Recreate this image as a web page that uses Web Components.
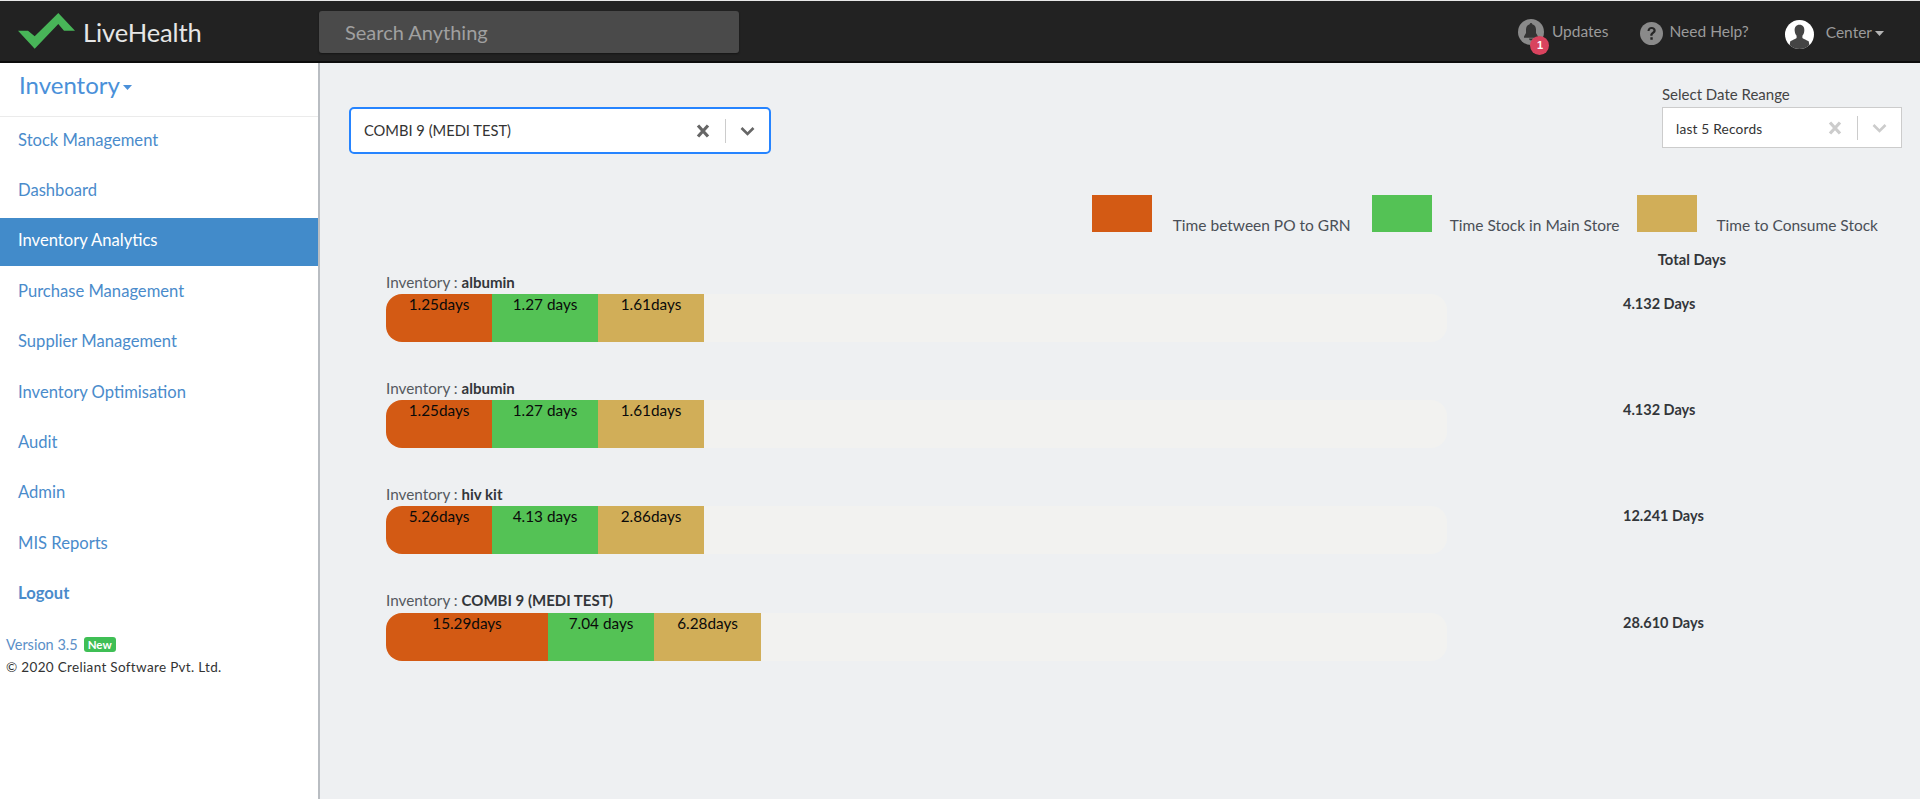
<!DOCTYPE html>
<html><head><meta charset="utf-8"><title>LiveHealth</title>
<style>
html,body{margin:0;height:100%;overflow:hidden;background:#eef0f2;font-family:Lato,"Open Sans",sans-serif}
</style></head><body>
<lh-app></lh-app>
<script>
function def(name,css,html,init){
  customElements.define(name,class extends HTMLElement{
    connectedCallback(){
      if(this.shadowRoot)return;
      const r=this.attachShadow({mode:'open'});
      const a=n=>this.getAttribute(n)||'';
      r.innerHTML='<style>'+css+'</style>'+(typeof html==='function'?html(a):html);
      if(init)init.call(this,r);
    }
  });
}
const caret=c=>`<svg width="9" height="5" viewBox="0 0 9 5" style="display:block"><path d="M0 0h9L4.5 5z" fill="${c}"/></svg>`;

def('lh-app',`:host{display:flex;flex-direction:column;height:799px;width:1920px}
.b{display:flex;flex:1;min-height:0}`,
`<lh-header></lh-header><div class="b"><lh-sidebar></lh-sidebar><lh-main></lh-main></div>`);

def('lh-header',`:host{display:flex;align-items:center;box-sizing:border-box;height:63px;background:#222;border-top:1px solid #e8e8e8;border-bottom:2px solid #0c0c0c;padding-top:2px;color:#9b9b9b;font:15.500px Lato,sans-serif}
.logo{display:flex;align-items:center;width:319px;flex:none}
svg.m{margin-left:18px;display:block;flex:none;margin-top:-2px}
.name{margin-left:7px;font-size:25.500px;color:#e6e6e6;font-weight:400;letter-spacing:-.1px;line-height:30px}
.search{width:420px;height:42px;background:#4a4a4a;border-radius:3px;box-shadow:0 1px 2px #0006;box-sizing:border-box;padding-left:26px;display:flex;align-items:center;font-size:20px;color:#a0a0a0}
.right{margin-left:auto;display:flex;align-items:center;height:100%}
.ic{position:relative;display:block}
.badge{position:absolute;left:12.500px;top:16.500px;width:19px;height:19px;border-radius:50%;background:#d9435e;color:#fff;font:700 11px/19px "Liberation Sans",sans-serif;text-align:center}
.i1{margin-right:8px;width:26px;height:26px}
.i2{margin-left:31px;margin-right:7px;margin-top:2px}
.av{margin-left:36px;margin-right:12px;margin-top:5px}
.car{margin-left:3px;margin-top:2px}
.t{line-height:20px}
.up{margin-top:-2px}`,
`<div class="logo"><svg class="m" width="58" height="38" viewBox="0 0 58 38"><path d="M0 18.700H10L16.700 24.300 40.300 1 57 18.700H46L40.300 12 16.700 36.700z" fill="#48b558"/></svg><span class="name">LiveHealth</span></div>
<div class="search">Search Anything</div>
<div class="right" style="margin-right:36px">
<span class="ic i1"><svg width="26" height="26" viewBox="0 0 26 26" style="display:block"><circle cx="13" cy="13" r="13" fill="#8a8a8a"/><path d="M13 4c-.8 0-1.300.6-1.300 1.300-2.300.6-3.700 2.600-3.700 5.200v3.500L6 17.500v1.300h14v-1.300L18 14v-3.500c0-2.600-1.400-4.600-3.700-5.200C14.300 4.600 13.800 4 13 4zM11 19.500a2 2 0 0 0 4 0z" fill="#343434"/></svg><span class="badge">1</span></span>
<span class="t up">Updates</span>
<svg class="i2" width="23" height="23" viewBox="0 0 24 24"><circle cx="12" cy="12" r="12" fill="#8a8a8a"/><path d="M7.800 9.300C8 6.800 9.800 5.300 12.100 5.300c2.500 0 4.300 1.500 4.300 3.600 0 1.700-1 2.500-2.200 3.300-1 .7-1.200 1.100-1.200 2.200h-2.300c0-1.900.5-2.800 1.800-3.700 1-.7 1.500-1.100 1.500-1.800 0-.9-.8-1.500-1.900-1.500-1.200 0-2 .7-2.100 1.900zM10.800 15.800h2.500v2.800h-2.500z" fill="#262626"/></svg>
<span class="t up">Need Help?</span>
<svg class="av" width="29" height="29" viewBox="0 0 30 30"><defs><clipPath id="c"><circle cx="15" cy="15" r="15"/></clipPath></defs><circle cx="15" cy="15" r="15" fill="#fff"/><g clip-path="url(#c)"><path d="M15 5c-3.500 0-5.300 2.700-5 6 .2 2.300 1 4 2 5.200v2.300c-1 1.200-4.500 2-6.500 3.500L4 30h22l-1.500-8c-2-1.500-5.500-2.300-6.500-3.500v-2.300c1-1.200 1.800-2.900 2-5.200.3-3.300-1.500-6-5-6z" fill="#454545"/></g></svg>
<span class="t">Center</span><span class="car">${caret('#b5b5b5')}</span>
</div>`);

def('lh-sidebar',`:host{display:block;box-sizing:border-box;width:320px;flex:none;background:#fff;border-right:2px solid #b9bdc2;color:#428bca;font:15.500px Lato,sans-serif}
.h{box-sizing:border-box;height:54px;border-bottom:1px solid #ebebeb;padding:2px 0 0 19px;display:flex;align-items:flex-start;font-size:24px;line-height:40px;color:#4a90d9}
.h span{margin:20px 0 0 3px}
nav{display:flex;flex-direction:column;margin-top:-1px}
.foot{margin:14px 0 0 6px;font-size:14.500px;line-height:22px;color:#333}
.v{color:#5b8fc7;display:flex;align-items:center}
.new{margin-left:6px;background:#3fbf55;color:#fff;border-radius:3px;font-size:11.500px;font-weight:700;line-height:15px;padding:0 4px}
.c{font-size:13.500px;letter-spacing:.33px}`,
`<div class="h">Inventory<span>${caret('#4a90d9')}</span></div>
<nav>
<lh-nav-item>Stock Management</lh-nav-item>
<lh-nav-item>Dashboard</lh-nav-item>
<lh-nav-item active>Inventory Analytics</lh-nav-item>
<lh-nav-item>Purchase Management</lh-nav-item>
<lh-nav-item>Supplier Management</lh-nav-item>
<lh-nav-item>Inventory Optimisation</lh-nav-item>
<lh-nav-item>Audit</lh-nav-item>
<lh-nav-item>Admin</lh-nav-item>
<lh-nav-item>MIS Reports</lh-nav-item>
<lh-nav-item bold>Logout</lh-nav-item>
</nav>
<div class="foot"><div class="v">Version 3.5<span class="new">New</span></div><div class="c">© 2020 Creliant Software Pvt. Ltd.</div></div>`);

def('lh-nav-item',`:host{display:flex;align-items:center;box-sizing:border-box;flex:none;height:48px;margin:1.200px 0;padding:0 0 3px 18px;color:#4a8bcb;font-size:16.600px}
:host([active]){background:#428bca;color:#fff}
:host([bold]){font-weight:700}`,`<slot></slot>`);

def('lh-select',`:host{display:flex;align-items:center;box-sizing:border-box;background:#fff;font-family:Lato,sans-serif;color:#333}
.t{flex:1;white-space:nowrap}
.sep{width:1px;align-self:center;height:24px;background:#ccc;margin:0 14px 0 15px}
svg{display:block;flex:none}
.d{margin-right:14px}
:host([focus]){width:422px;height:47px;border:2px solid #2684ff;border-radius:5px;padding-left:13px;font-size:14.700px;margin-top:22px}
:host([focus]) svg{color:#666}
:host([focus]) .t{margin-top:-2px}
:host(:not([focus])){width:240px;height:41px;border:1px solid #ccc;padding:2px 0 0 13px;font-size:13.700px;letter-spacing:.2px}
:host(:not([focus])) svg,:host(:not([focus])) .sep{margin-top:-2px}
:host(:not([focus])) svg{color:#ccc}`,
a=>`<span class="t">${a('value')}</span>
<svg class="x" width="14" height="14" viewBox="0 0 14 14"><path d="M2 1.500l10 11M12 1.500l-10 11" stroke="currentColor" stroke-width="3.200" fill="none"/></svg>
<span class="sep"></span>
<svg class="d" width="15" height="10" viewBox="0 0 15 10"><path d="M1.500 2l6 6 6-6" stroke="currentColor" stroke-width="2.600" fill="none"/></svg>`);

def('lh-date',`:host{display:block;width:240px;color:#444;font:15px/20px Lato,sans-serif}
.l{height:22px;margin-top:-1px;margin-bottom:1px}`,
`<div class="l">Select Date Reange</div><lh-select value="last 5 Records"></lh-select>`);

def('lh-legend-item',`:host{display:flex;align-items:flex-end;font:15.500px/18px Lato,sans-serif;color:#4a4f57}
i{display:block;width:60px;height:37px;background:var(--c)}
span{margin-bottom:-2px;white-space:nowrap}`,
a=>`<i style="--c:${a('color')};margin-right:${a('gap')}px"></i><span>${a('label')}</span>`);

def('lh-bar-row',`:host{display:flex;align-items:flex-start;height:106px;font:15.300px/20px Lato,sans-serif;color:#55595f}
.w{width:1061px;flex:none}
.l{height:22px;line-height:20px}
:host(:last-child) .l{height:23px}
:host(:last-child) .v{margin-top:23px}
b{font-weight:700;color:#33363a;font-size:15px}
.bar{display:flex;height:48px;background:#f2f2f0;border-radius:16px;overflow:hidden;color:#0a0a0a;text-align:center;line-height:20px}
.bar span{display:block}
.v{margin:22px 0 0 176px;font-weight:700;color:#33363a;font-size:14.500px;line-height:20px}`,
a=>{const s=a('segs').split('|').map((x,i)=>{const[p,t]=x.split(':');return `<span style="width:${p}px;background:${['#d35a14','#54c255','#d1ae58'][i]}">${t}</span>`}).join('');
return `<div class="w"><div class="l">Inventory : <b>${a('name')}</b></div><div class="bar">${s}</div></div><div class="v">${a('total')}</div>`});

def('lh-main',`:host{display:block;flex:1;min-width:0;box-sizing:border-box;padding:22px 0 0 0;background:#eef0f2}
.top{display:flex;justify-content:space-between;align-items:flex-start;padding:0 18px 0 29px;height:69px}
.leg{display:flex;margin:41px 42px 0 0;justify-content:flex-end}
.td{font:700 14.800px/20px Lato,sans-serif;color:#33363a;text-align:right;padding-right:194px;margin-top:17px}
.rows{margin:3px 0 0 66px}`,
`<div class="top"><lh-select focus value="COMBI 9 (MEDI TEST)"></lh-select><lh-date></lh-date></div>
<div class="leg">
<lh-legend-item color="#d35a14" gap="21" label="Time between PO to GRN" style="margin-right:21px"></lh-legend-item>
<lh-legend-item color="#54c255" gap="18" label="Time Stock in Main Store" style="margin-right:18px"></lh-legend-item>
<lh-legend-item color="#d1ae58" gap="19" label="Time to Consume Stock"></lh-legend-item>
</div>
<div class="td">Total Days</div>
<div class="rows">
<lh-bar-row name="albumin" total="4.132 Days" segs="106:1.25days|106:1.27 days|106:1.61days"></lh-bar-row>
<lh-bar-row name="albumin" total="4.132 Days" segs="106:1.25days|106:1.27 days|106:1.61days"></lh-bar-row>
<lh-bar-row name="hiv kit" total="12.241 Days" segs="106:5.26days|106:4.13 days|106:2.86days"></lh-bar-row>
<lh-bar-row name="COMBI 9 (MEDI TEST)" total="28.610 Days" segs="162:15.29days|106:7.04 days|107:6.28days"></lh-bar-row>
</div>`);
</script>
</body></html>
